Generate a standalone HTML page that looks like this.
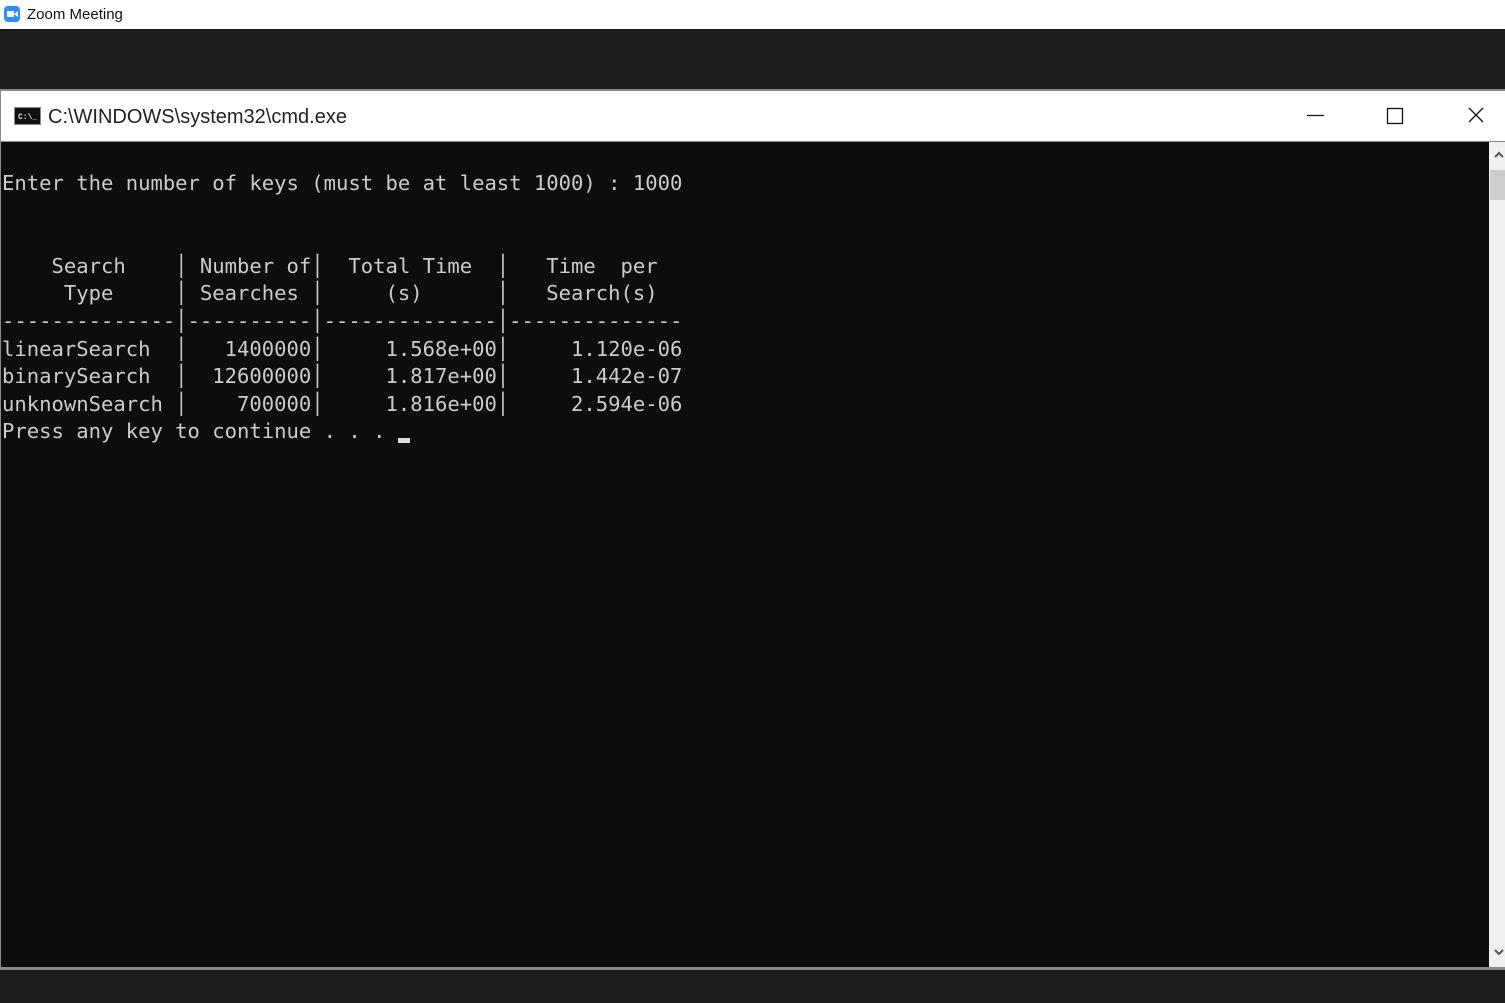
<!DOCTYPE html>
<html><head><meta charset="utf-8"><style>
body{margin:0;width:1505px;height:1003px;overflow:hidden;background:#1c1c1c;position:relative;font-family:"Liberation Sans",sans-serif}
#zt{position:absolute;left:0;top:0;width:1505px;height:29px;background:#fff}
#zt .ic{position:absolute;left:4px;top:6px;width:16px;height:16px;border-radius:4px;background:#2d8cff}
#zt .ic i{position:absolute;left:3px;top:5px;width:7px;height:6px;background:#fff;border-radius:1px}
#zt .ic b{position:absolute;left:10px;top:5px;width:0;height:0;border-top:3px solid transparent;border-bottom:3px solid transparent;border-right:4px solid #fff}
#zt span{position:absolute;left:27px;top:6px;font-size:15px;color:#111}
#win{position:absolute;left:0;top:89px;width:1505px;height:881px;background:#888}
#tb{position:absolute;left:1px;top:91px;width:1504px;height:50px;background:#fff}
#tb .t{position:absolute;left:47px;top:15px;font-size:20px;color:#222}
#tb .cm{position:absolute;left:13px;top:16px;width:27px;height:18px;background:#111;border:1px solid #888;box-sizing:border-box}
#tb .cm i{position:absolute;left:3px;top:5px;color:#ddd;font:bold 8px "Liberation Mono";font-style:normal}
#con{position:absolute;left:1px;top:142px;width:1488px;height:825px;background:#0d0c0f}
#sb{position:absolute;left:1489px;top:142px;width:16px;height:825px;background:#f0f0f0}
#sb .th{position:absolute;left:1px;top:28px;width:15px;height:30px;background:#cdcdcd}
pre{position:absolute;left:2px;top:170px;margin:0;font-family:"DejaVu Sans Mono","Liberation Mono",monospace;font-size:20.56px;line-height:27.6px;color:#cccccc}
#cur{position:absolute;left:398px;top:438px;width:12px;height:5px;background:#ddd}
</style></head><body>
<div id="zt"><div class="ic"><i></i><b></b></div><span>Zoom Meeting</span></div>
<div id="win"></div>
<div id="tb"><div class="cm"><i>C:\_</i></div><div class="t">C:\WINDOWS\system32\cmd.exe</div>
<svg style="position:absolute;left:1300px;top:14px" width="190" height="24"><path d="M6 10.5H23" stroke="#111" stroke-width="1.2"/><rect x="86.5" y="3.5" width="15" height="15" fill="none" stroke="#111" stroke-width="1.3"/><path d="M168 3L182 17M182 3L168 17" stroke="#111" stroke-width="1.3"/></svg></div>
<div id="con"></div>
<div id="sb"><div class="th"></div><svg style="position:absolute;left:4px;top:8px" width="12" height="10"><path d="M2 7L6 3L10 7" stroke="#555" stroke-width="2" fill="none"/></svg><svg style="position:absolute;left:4px;top:805px" width="12" height="10"><path d="M2 3L6 7L10 3" stroke="#555" stroke-width="2" fill="none"/></svg></div>
<pre>Enter the number of keys (must be at least 1000) : 1000


    Search    │ Number of│  Total Time  │   Time  per
     Type     │ Searches │     (s)      │   Search(s)
--------------│----------│--------------│--------------
linearSearch  │   1400000│     1.568e+00│     1.120e-06
binarySearch  │  12600000│     1.817e+00│     1.442e-07
unknownSearch │    700000│     1.816e+00│     2.594e-06
Press any key to continue . . . </pre>
<div id="cur"></div>
</body></html>
